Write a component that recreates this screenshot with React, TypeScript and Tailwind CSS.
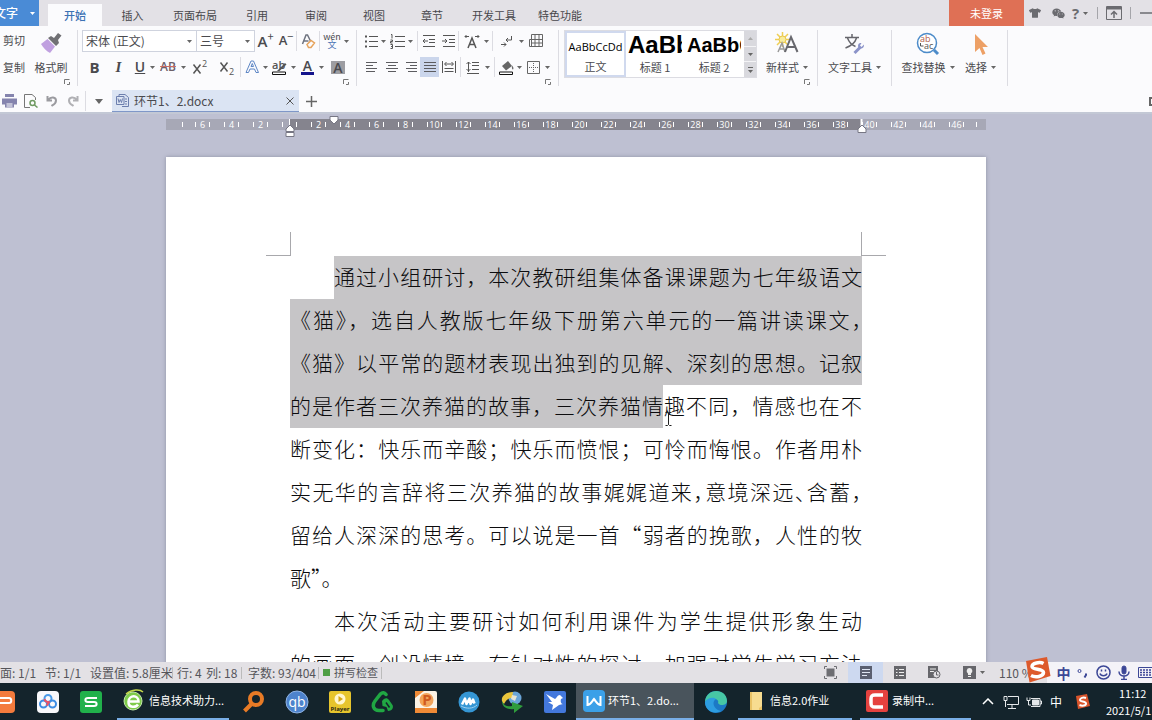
import type { ReactNode } from "react";
import { FaTshirt, FaWeixin } from "react-icons/fa";
import { clsx } from "clsx";

const menuTabs = [
	{ label: "插入", width: "w-[61px]" },
	{ label: "页面布局", width: "w-[64px]" },
	{ label: "引用", width: "w-[60px]" },
	{ label: "审阅", width: "w-[58px]" },
	{ label: "视图", width: "w-[58px]" },
	{ label: "章节", width: "w-[58px]" },
	{ label: "开发工具", width: "w-[66px]" },
	{ label: "特色功能", width: "w-[66px]" },
];

// even labels of the ruler, 0 is where the text column starts
const rulerMarks = Array.from({ length: 27 }, (_, i) => i * 2 - 6);

function Caret() {
	return (
		<svg width="5" height="3" viewBox="0 0 5 3" className="shrink-0" aria-hidden="true">
			<path d="M0 0h5L2.5 3z" fill="#666" />
		</svg>
	);
}

function Tool({
	label,
	width,
	active,
	children,
}: {
	label: string;
	width: string;
	active?: boolean;
	children: ReactNode;
}) {
	return (
		<button
			aria-label={label}
			className={clsx(
				"flex h-5 shrink-0 items-center justify-center",
				width,
				active && "bg-[#cbd6ec]",
			)}
		>
			{children}
		</button>
	);
}

function Split() {
	return <span className="h-5 w-px shrink-0 bg-[#dcdce2]" />;
}

function Launcher() {
	return (
		<button aria-label="更多设置" className="flex h-2 w-2 items-center justify-center">
			<svg width="6" height="6" viewBox="0 0 6 6" fill="none" stroke="#777">
				<path d="M.5 5V.5H5.5M3 5.5h2.5V3" />
			</svg>
		</button>
	);
}

function Lines({ rows }: { rows: [number, number][] }) {
	return (
		<svg width="14" height="12" viewBox="0 0 14 12" stroke="#5c5c60" aria-hidden="true">
			{rows.map(([from, to], i) => (
				<path key={i} d={`M${from} ${i * 3 + 1.5}H${to}`} />
			))}
		</svg>
	);
}

function TitleBar() {
	return (
		<header className="flex h-[26px] shrink-0 bg-[#e3e1e6] text-[11px] text-[#47474b]">
			<button className="flex w-[39px] items-center justify-end gap-3 bg-[#4a8bd6] pr-1 font-medium text-white">
				<span className="shrink-0 text-xs">文字</span>
				<svg width="5" height="3" viewBox="0 0 5 3" className="shrink-0" aria-hidden="true">
					<path d="M0 0h5L2.5 3z" fill="#fff" />
				</svg>
			</button>
			<nav className="ml-[9px] flex items-end">
				<button className="h-[22px] w-[54px] bg-[#fbfbfd] font-medium text-[#3b72b4]">开始</button>
				{menuTabs.map((t) => (
					<button key={t.label} className={clsx("h-[22px] shrink-0", t.width)}>
						{t.label}
					</button>
				))}
			</nav>
			<div className="ml-auto flex items-center text-[#6b6b70]">
				<button className="mr-[5px] h-full w-[75px] bg-[#df7055] text-white">未登录</button>
				<button aria-label="皮肤" className="w-[23px]">
					<FaTshirt size={12} />
				</button>
				<button aria-label="微信" className="w-[20px]">
					<FaWeixin size={13} />
				</button>
				<button aria-label="帮助" className="flex w-[25px] items-center gap-1 font-['Open_Sans'] text-[15px] font-bold">
					?
					<Caret />
				</button>
				<span className="h-3 w-px bg-[#a5a5aa]" />
				<button aria-label="隐藏功能区" className="flex w-[32px] justify-center">
					<svg width="16" height="14" viewBox="0 0 16 14" fill="none" stroke="#6b6b70">
						<path d="M.5.5h15v13H.5z" />
						<path d="M1 2h14" strokeWidth="3" />
						<path d="M8 12V5.500M5 8.500l3-3 3 3" strokeWidth="1.500" />
					</svg>
				</button>
				<span className="h-3 w-px bg-[#a5a5aa]" />
				<button aria-label="最小化" className="flex w-[21px] justify-end">
					<svg width="12" height="4" viewBox="0 0 12 4" aria-hidden="true">
						<path d="M0 2h12" stroke="#6b6b70" strokeWidth="1.500" />
					</svg>
				</button>
			</div>
		</header>
	);
}

function ClipboardGroup() {
	return (
		<div className="flex w-[78px] shrink-0 flex-col justify-between border-r border-[#dcdce2]">
			<div className="flex">
				<div className="flex w-[30px] flex-col gap-[7px] pl-[3px]">
					<button className="h-5 text-left whitespace-nowrap">剪切</button>
					<button className="h-5 text-left whitespace-nowrap">复制</button>
				</div>
				<button className="flex w-[42px] flex-col items-center">
					<svg width="22" height="22" viewBox="0 0 22 22" className="mt-[2px]" aria-hidden="true">
						<path d="M14 6l4-5 3.500 2.500-3.500 4.500 1 3-3 3L8 6l3-2z" fill="#707074" />
						<path d="M7.500 7l7.500 7.500-5 6.500C6 19 3 15.500 1 12z" fill="#c0a0e0" />
					</svg>
					<span className="mt-[3px] h-5 leading-5">格式刷</span>
				</button>
			</div>
			<div className="flex justify-end pr-[6px]">
				<Launcher />
			</div>
		</div>
	);
}

function FontGroup() {
	return (
		<div className="flex w-[279px] shrink-0 flex-col border-r border-[#dcdce2] pl-1">
			<div className="flex items-center">
				<div className="flex h-[22px] w-[173px] border border-[#cfd3de] bg-white">
					<label className="flex w-[114px] items-center border-r border-[#cfd3de] pr-1">
						<select aria-label="字体" className="w-full appearance-none bg-transparent pl-[3px] text-xs leading-4 outline-none">
							<option>宋体 (正文)</option>
						</select>
						<Caret />
					</label>
					<label className="flex flex-1 items-center pr-1">
						<select aria-label="字号" className="w-full appearance-none bg-transparent pl-[3px] text-xs leading-4 outline-none">
							<option>三号</option>
						</select>
						<Caret />
					</label>
				</div>
				<Tool label="增大字号" width="w-[21px]">
					<span className="font-['Open_Sans'] text-[15px] font-semibold">A</span>
					<sup className="text-[11px]">+</sup>
				</Tool>
				<Tool label="减小字号" width="w-[20px]">
					<span className="font-['Open_Sans'] text-[13px] font-semibold">A</span>
					<sup className="text-[11px]">−</sup>
				</Tool>
				<Split />
				<Tool label="清除格式" width="w-[22px]">
					<svg width="15" height="16" viewBox="0 0 15 16" fill="none" aria-hidden="true">
						<path d="M1.500 11L5 2h1.500l3 6M3 8h4.500" stroke="#6f7480" strokeWidth="1.500" />
						<path d="M6 11.500L10 7.500l3.500 2.500-3.500 4.500H7.500z" stroke="#e6a35c" strokeWidth="1.500" />
					</svg>
				</Tool>
				<Split />
				<Tool label="拼音指南" width="w-[24px]">
					<span className="flex flex-col items-center leading-none">
						<span className="text-[9px] leading-[7px]">wén</span>
						<span className="text-[9px] leading-[9px] text-[#4b73b5]">文</span>
					</span>
				</Tool>
				<Caret />
			</div>
			<div className="mt-[5px] flex items-center font-['Open_Sans'] text-[15px]">
				<Tool label="加粗" width="w-[25px]"><b>B</b></Tool>
				<Tool label="倾斜" width="w-[23px]"><i className="font-['Liberation_Serif'] font-bold">I</i></Tool>
				<Tool label="下划线" width="w-[20px]"><span className="text-sm font-semibold underline">U</span></Tool>
				<Caret />
				<Tool label="删除线" width="w-[26px]">
					<span className="text-xs font-semibold text-[#6d6068] line-through decoration-[#cc6a62]">AB</span>
				</Tool>
				<Caret />
				<Tool label="上标" width="w-[28px]">
					<svg width="16" height="15" viewBox="0 0 16 15" aria-hidden="true">
						<path d="M1.500 4.500l7 9M8.500 4.500l-7 9" stroke="#555" strokeWidth="1.500" />
						<text x="10" y="7" fontSize="9" fontFamily="Open Sans" fill="#555">2</text>
					</svg>
				</Tool>
				<Tool label="下标" width="w-[26px]">
					<svg width="16" height="15" viewBox="0 0 16 15" aria-hidden="true">
						<path d="M1.500 2.500l7 9M8.500 2.500l-7 9" stroke="#555" strokeWidth="1.500" />
						<text x="10" y="15" fontSize="9" fontFamily="Open Sans" fill="#555">2</text>
					</svg>
				</Tool>
				<Split />
				<Tool label="文字效果" width="w-[22px]">
					<svg width="15" height="14" viewBox="0 0 15 14" fill="none" stroke="#5d86c5" aria-hidden="true">
						<path d="M1 12.500L6 1h2.500l5 11.500H11L9.500 9H5l-1.500 3.500zM6 6.500h2.500L7.300 3.500z" />
					</svg>
				</Tool>
				<Caret />
				<Tool label="突出显示" width="w-[23px]">
					<svg width="15" height="15" viewBox="0 0 15 15" aria-hidden="true">
						<text x="0" y="9" fontSize="11" fontFamily="Open Sans" fontWeight="600" fill="#555">ab</text>
						<path d="M5 11l8-8 1.500 1.500-7 6.500z" fill="#555" />
						<path d="M.5 12h13v2.500H.5z" fill="#fff" stroke="#111" />
					</svg>
				</Tool>
				<Caret />
				<Tool label="字体颜色" width="w-[23px]">
					<span className="border-b-[3px] border-[#14148c] px-[2px] text-sm leading-[13px] font-semibold">A</span>
				</Tool>
				<Caret />
				<Tool label="字符底纹" width="w-[28px]">
					<span className="bg-[#9d9da2] px-[2px] text-sm leading-[13px] font-semibold">A</span>
				</Tool>
			</div>
			<div className="mt-auto flex justify-end pr-[6px]">
				<Launcher />
			</div>
		</div>
	);
}

function ParagraphGroup() {
	return (
		<div className="flex w-[202px] shrink-0 flex-col border-r border-[#dcdce2] pl-[5px]">
			<div className="mt-px flex items-center">
				<Tool label="项目符号" width="w-[19px]">
					<svg width="14" height="14" viewBox="0 0 14 14" stroke="#555" aria-hidden="true">
						<path d="M4 2.500h9M4 7.500h9M4 12.500h9" />
						<path d="M0 2.500h2M0 7.500h2M0 12.500h2" strokeWidth="2" />
					</svg>
				</Tool>
				<Caret />
				<Tool label="编号" width="w-[22px]">
					<svg width="15" height="16" viewBox="0 0 15 16" aria-hidden="true">
						<path d="M5 3.500h10M5 8.500h10M5 13.500h10" stroke="#555" />
						<path d="M1 1.500h1v4M.5 7h2v1.500h-2V10h2M.5 11.500h2v4h-2M1 13.500h1" fill="none" stroke="#555" />
					</svg>
				</Tool>
				<Caret />
				<span className="w-[4px]" />
				<Split />
				<Tool label="减少缩进" width="w-[22px]">
					<svg width="14" height="12" viewBox="0 0 14 12" fill="none" stroke="#555" aria-hidden="true">
						<path d="M1 .5h12M7 4.500h6M7 7.500h6M1 11.500h12M6 6H1M3 4L1 6l2 2" />
					</svg>
				</Tool>
				<Tool label="增加缩进" width="w-[18px]">
					<svg width="14" height="12" viewBox="0 0 14 12" fill="none" stroke="#555" aria-hidden="true">
						<path d="M1 .5h12M7 4.500h6M7 7.500h6M1 11.500h12M0 6h5M3 4l2 2-2 2" />
					</svg>
				</Tool>
				<Split />
				<Tool label="中文版式" width="w-[25px]">
					<svg width="16" height="15" viewBox="0 0 16 15" fill="none" stroke="#555" aria-hidden="true">
						<path d="M4 14L8 4l4 10M5.500 10.500h5" strokeWidth="1.500" />
						<path d="M5 2.500H1M2.500 1L1 2.500 2.500 4M11 2.500h4M13.500 1L15 2.500 13.500 4" />
					</svg>
				</Tool>
				<Caret />
				<span className="w-[3px]" />
				<Split />
				<Tool label="换行符" width="w-[26px]">
					<svg width="13" height="13" viewBox="0 0 13 13" fill="none" stroke="#555" aria-hidden="true">
						<path d="M11.500 1v4H6M8 3L6 5l2 2M1 9.500h5M4 7.500l2 2-2 2" />
					</svg>
				</Tool>
				<Caret />
				<Tool label="插入表格" width="w-[24px]">
					<svg width="14" height="14" viewBox="0 0 14 14" fill="none" stroke="#666" aria-hidden="true">
						<path d="M2.500.5h11v12H.5v-7h13M2.500.5v12M6 .5v12M10 .5v12M2.500 9H13" />
					</svg>
				</Tool>
			</div>
			<div className="mt-[6px] flex items-center">
				<Tool label="左对齐" width="w-[20px]"><Lines rows={[[1, 12], [1, 8], [1, 12], [1, 10]]} /></Tool>
				<Tool label="居中" width="w-[20px]"><Lines rows={[[1, 13], [3, 11], [1, 13], [3, 11]]} /></Tool>
				<Tool label="右对齐" width="w-[18px]"><Lines rows={[[2, 13], [6, 13], [2, 13], [4, 13]]} /></Tool>
				<Tool label="两端对齐" width="w-[19px]" active><Lines rows={[[1, 13], [1, 13], [1, 13], [1, 13]]} /></Tool>
				<Tool label="分散对齐" width="w-[19px]">
					<svg width="14" height="12" viewBox="0 0 14 12" fill="none" stroke="#555" aria-hidden="true">
						<path d="M.5 0v12M13.500 0v12M3 3h8M4.500 1L2.500 3l2 2M9.500 1l2 2-2 2M2.500 7.500h9M2.500 10.500h9" />
					</svg>
				</Tool>
				<span className="w-[2px]" />
				<Split />
				<Tool label="行距" width="w-[24px]">
					<svg width="14" height="13" viewBox="0 0 14 13" fill="none" stroke="#555" aria-hidden="true">
						<path d="M6 1.500h7M6 4.500h7M6 8.500h7M1 12.500h12M2.500 1v10M.5 3l2-2 2 2M.5 8l2 2 2-2" />
					</svg>
				</Tool>
				<Caret />
				<span className="w-[4px]" />
				<Split />
				<Tool label="底纹颜色" width="w-[22px]">
					<svg width="15" height="15" viewBox="0 0 15 15" aria-hidden="true">
						<path d="M3 6l6-5 4 5-6 4.500z" fill="#666" />
						<path d="M13 5.500c2 2 1.500 3.500 1 4s-1.500-1-1-4z" fill="#666" />
						<path d="M.5 12h13v2.500H.5z" fill="#fff" stroke="#111" />
					</svg>
				</Tool>
				<Caret />
				<Tool label="边框" width="w-[23px]">
					<svg width="13" height="13" viewBox="0 0 13 13" fill="none" stroke="#666" aria-hidden="true">
						<path d="M.5.5h12v12H.5z" />
						<path d="M6.500 2v10M2 6.500h10" strokeDasharray="1 1" />
					</svg>
				</Tool>
				<Caret />
			</div>
			<div className="mt-auto flex justify-end pr-[6px]">
				<Launcher />
			</div>
		</div>
	);
}

function StyleGroup() {
	return (
		<div className="flex w-[259px] shrink-0 border-r border-[#dcdce2] pl-[5px]">
			<div className="flex h-12 w-[193px] border border-[#dcdce2] bg-white">
				<button className="flex w-[61px] shrink-0 flex-col items-center border-2 border-[#d0d9ee] pt-[6px]">
					<span className="font-['Open_Sans'] text-[11px] leading-4 text-black">AaBbCcDd</span>
					<span className="mt-[3px] leading-4">正文</span>
				</button>
				<button className="flex w-[58px] shrink-0 flex-col items-center">
					<span className="w-[54px] overflow-hidden text-left font-['Liberation_Sans'] text-2xl leading-7 font-bold text-black">AaBb</span>
					<span className="leading-4">标题 1</span>
				</button>
				<button className="flex w-[60px] shrink-0 flex-col items-center">
					<span className="w-[54px] overflow-hidden text-left font-['Liberation_Sans'] text-xl leading-7 font-bold text-black">AaBbC</span>
					<span className="leading-4">标题 2</span>
				</button>
				<div className="flex flex-1 flex-col divide-y divide-[#f4f4f6] bg-[#d9d9de]">
					<button aria-label="向上" className="flex flex-1 items-center justify-center">
						<svg width="5" height="3" viewBox="0 0 5 3"><path d="M0 3h5L2.500 0z" fill="#aaa" /></svg>
					</button>
					<button aria-label="向下" className="flex flex-1 items-center justify-center"><Caret /></button>
					<button aria-label="展开样式" className="flex flex-1 flex-col items-center justify-center gap-[2px]">
						<span className="h-px w-[5px] bg-[#666]" />
						<Caret />
					</button>
				</div>
			</div>
			<div className="flex flex-1 flex-col justify-between">
				<button className="flex flex-col items-center">
					<svg width="24" height="24" viewBox="0 0 24 24" className="mt-[2px]" aria-hidden="true">
						<path d="M7.500 0v15M0 7.500h15M2 2l11 11M13 2L2 13" stroke="#efcf55" strokeWidth="1.500" />
						<circle cx="7.500" cy="7.500" r="3.500" fill="#f8ec9c" stroke="#e9c549" />
						<path d="M3 20l4-9 3 9M5 17h4" stroke="#999" fill="none" strokeWidth="1.500" />
						<path d="M10 20l6-15 6.500 15M12.500 15h7" stroke="#68686e" strokeWidth="2" fill="none" />
					</svg>
					<span className="mt-px flex h-5 items-center gap-1 whitespace-nowrap">新样式 <Caret /></span>
				</button>
				<div className="flex justify-end pr-[6px]">
					<Launcher />
				</div>
			</div>
		</div>
	);
}

function Ribbon() {
	return (
		<div className="flex h-[64px] shrink-0 bg-[#fbfbfd] pt-1 pb-1 text-[11px] text-[#4a4a4e]">
			<ClipboardGroup />
			<FontGroup />
			<ParagraphGroup />
			<StyleGroup />
			<div className="flex w-[74px] shrink-0 justify-center border-r border-[#dcdce2]">
				<button className="flex flex-col items-center">
					<svg width="22" height="22" viewBox="0 0 22 22" fill="none" className="mt-[3px]" aria-hidden="true">
						<path d="M1 4.500h14M8 1v3M12.500 5C11 10 7 13 1.500 15M3.500 5c1.500 4 4 7 8 8.500" stroke="#66666c" strokeWidth="1.500" />
						<path d="M10.500 20l6-6" stroke="#8b93c9" strokeWidth="3" />
						<path d="M20 11.500l-2.500 2.500-1.500-1.500 1.500-2.500c-3-.5-4 2-3 4.500 2 2 6 1 5.500-3z" fill="#8b93c9" />
					</svg>
					<span className="mt-[2px] flex h-5 items-center gap-1 whitespace-nowrap">文字工具 <Caret /></span>
				</button>
			</div>
			<div className="flex w-[116px] shrink-0 border-r border-[#dcdce2] pl-[9px]">
				<button className="flex w-[54px] flex-col items-center">
					<svg width="24" height="24" viewBox="0 0 24 24" className="mt-[2px]" aria-hidden="true">
						<circle cx="11" cy="11" r="9.500" fill="#fff" stroke="#4c8bc9" strokeWidth="1.500" />
						<path d="M18 18l4 4" stroke="#4c8bc9" strokeWidth="3" />
						<text x="4" y="10" fontSize="9" fontFamily="Open Sans" fill="#b0604c">ab</text>
						<text x="8" y="17" fontSize="9" fontFamily="Open Sans" fill="#555">ac</text>
						<path d="M4.500 11v3h3" stroke="#555" fill="none" />
					</svg>
					<span className="mt-px flex h-5 items-center gap-1 whitespace-nowrap">查找替换 <Caret /></span>
				</button>
				<button className="flex w-[51px] flex-col items-center">
					<svg width="16" height="22" viewBox="0 0 16 22" className="mt-[4px]" aria-hidden="true">
						<path d="M2 0l13 13H9.500l3 6.500-3 1.500-3-7L2 18z" fill="#eda066" />
					</svg>
					<span className="mt-px flex h-5 items-center gap-1 whitespace-nowrap">选择 <Caret /></span>
				</button>
			</div>
		</div>
	);
}

function DocTabs() {
	return (
		<div className="flex h-6 shrink-0 items-center border-b-2 border-[#c3c8d5] bg-[#fbfbfd] text-xs text-[#4a4a4e]">
			<button aria-label="打印" className="w-[20px] pl-[2px]">
				<svg width="15" height="14" viewBox="0 0 15 14" aria-hidden="true">
					<path d="M3 0h9v3H3zM0 4.500h15v6H0zM3 8h9v5.500H3z" fill="#8584ae" />
					<path d="M4.500 9.500h6v1h-6zM4.500 11.500h6v1h-6z" fill="#fff" />
				</svg>
			</button>
			<button aria-label="打印预览" className="flex w-[22px] justify-center">
				<svg width="14" height="14" viewBox="0 0 14 14" fill="none" stroke="#777" aria-hidden="true">
					<path d="M6 13.500H.5V.5H8l3.500 3V6" />
					<circle cx="8.500" cy="9" r="2.500" stroke="#6f9a62" strokeWidth="1.500" />
					<path d="M10.500 11l3 2.500" stroke="#6f9a62" strokeWidth="1.500" />
				</svg>
			</button>
			<button aria-label="撤销" className="flex w-[20px] justify-center">
				<svg width="12" height="12" viewBox="0 0 12 12" fill="none" stroke="#9b9ba0" strokeWidth="2" aria-hidden="true">
					<path d="M1.500 1v4.500H6M2 5c3-4 8-3 8 .5S7 10 5.500 11" />
				</svg>
			</button>
			<button aria-label="恢复" className="flex w-[21px] justify-center">
				<svg width="12" height="12" viewBox="0 0 12 12" fill="none" stroke="#b0b0b4" strokeWidth="2" aria-hidden="true">
					<path d="M10.500 1v4.500H6M10 5C7 1 2 2 2 5.500S5 10 6.500 11" />
				</svg>
			</button>
			<span className="ml-[2px] h-5 w-px bg-[#dcdce2]" />
			<button aria-label="自定义工具栏" className="flex w-[26px] justify-center">
				<svg width="8" height="5" viewBox="0 0 8 5" aria-hidden="true">
					<path d="M0 0h8L4 5z" fill="#666" />
				</svg>
			</button>
			<div className="flex h-[22px] w-[187px] items-center border-b border-[#7f97c8] bg-[#dbe4f3] pr-[5px] pl-1">
				<svg width="13" height="13" viewBox="0 0 13 13" fill="none" stroke="#6d7fae" aria-hidden="true">
					<path d="M3 2V.5h6l3.500 3v9H6" />
					<path d="M.5 2.500h7.500v8H.5zM2 4.500l1 4 1.300-3 1.200 3 1-4M9 5h2M9 7.500h2M9 10h2" />
				</svg>
				<span className="ml-[5px]">环节1、2.docx</span>
				<button aria-label="关闭" className="ml-auto">
					<svg width="8" height="8" viewBox="0 0 8 8" stroke="#555" aria-hidden="true">
						<path d="M.5.5l7 7M7.500.5l-7 7" />
					</svg>
				</button>
			</div>
			<button aria-label="新建" className="flex w-[25px] justify-center">
				<svg width="11" height="11" viewBox="0 0 11 11" stroke="#666" aria-hidden="true">
					<path d="M5.500 0v11M0 5.500h11" strokeWidth="1.500" />
				</svg>
			</button>
			<span className="ml-auto h-[9px] w-[3px] border-2 border-r-0 border-[#666]" />
		</div>
	);
}

function Ruler() {
	return (
		<div className="relative mx-auto mt-[5px] w-[820px]">
			<div className="flex h-[11px] items-center bg-[linear-gradient(to_right,#a7a8b6_124px,#85848e_124px,#85848e_696px,#a7a8b6_696px)] pr-[9px] pl-[16px] text-white">
				<span className="h-[5px] w-px bg-white" />
				<div className="ml-[5px] grid flex-1 grid-cols-[repeat(27,minmax(0,1fr))]">
					{rulerMarks.map((n) => (
						<div key={n} className="flex items-center px-[7px] leading-[11px]">
							<span className="h-[5px] w-px shrink-0 bg-white" />
							<span className="flex min-w-0 flex-1 justify-center font-['Open_Sans'] text-[9px]">
								{n === 0 ? "" : Math.abs(n)}
							</span>
							<span className="h-[5px] w-px shrink-0 bg-white" />
						</div>
					))}
				</div>
				<span className="ml-[5px] h-[5px] w-px bg-white" />
			</div>
			<svg width="10" height="18" viewBox="0 0 10 18" className="absolute top-0 left-[119px]" aria-hidden="true">
				<path d="M4.500 0v7" stroke="#fff" />
				<path d="M1 12.500V10l4-4 4 4v2.500zM1 13.500h8v4H1z" fill="#fff" stroke="#777784" />
			</svg>
			<svg width="10" height="9" viewBox="0 0 10 9" className="absolute -top-[3px] left-[163px]" aria-hidden="true">
				<path d="M1 .5h8V4L5 8 1 4z" fill="#fff" stroke="#777784" />
			</svg>
			<svg width="10" height="14" viewBox="0 0 10 14" className="absolute top-0 left-[691px]" aria-hidden="true">
				<path d="M4.500 0v7" stroke="#fff" strokeWidth="2" />
				<path d="M1 13.500V10l4-4 4 4v3.500z" fill="#fff" stroke="#777784" />
			</svg>
		</div>
	);
}

function Line({
	selected,
	width,
	children,
}: {
	selected?: boolean;
	width?: string;
	children: ReactNode;
}) {
	return (
		<div
			className={clsx(
				"pb-[3px] leading-10 whitespace-nowrap text-justify [text-align-last:justify]",
				selected && "bg-[#c6c5c7]",
				width,
			)}
		>
			{children}
		</div>
	);
}

// half-width form of a punctuation mark
function Half({ children }: { children: string }) {
	return <span className="[font-feature-settings:'halt']">{children}</span>;
}

function Page() {
	return (
		<article className="relative mx-auto mt-[27px] w-[820px] bg-white shadow-[0_0_4px_#8f91a4]">
			<div className="flex justify-between px-[100px] pt-[75px]">
				<span className="h-6 w-[25px] border-r border-b border-[#a8a8ac]" />
				<span className="h-6 w-[25px] border-b border-l border-[#a8a8ac]" />
			</div>
			<div className="px-[124px] text-[21px] font-light text-[#0c0c0e]">
				<div className="pl-[44px]">
					<Line selected>通过小组研讨，本次教研组集体备课课题为七年级语文</Line>
				</div>
				<Line selected>《猫》，选自人教版七年级下册第六单元的一篇讲读课文<Half>，</Half></Line>
				<Line selected>《猫》以平常的题材表现出独到的见解、深刻的思想。记叙</Line>
				<div className="flex gap-px">
					<Line selected width="w-[373px]">的是作者三次养猫的故事，三次养猫情</Line>
					<Line width="flex-1">趣不同，情感也在不</Line>
				</div>
				<Line>断变化：快乐而辛酸；快乐而愤恨；可怜而悔恨。作者用朴</Line>
				<Line>
					实无华的言辞将三次养猫的故事娓娓道来<Half>，</Half>意境深远<Half>、</Half>含蓄<Half>，</Half>
				</Line>
				<Line>留给人深深的思考。可以说是一首“弱者的挽歌，人性的牧</Line>
				<div className="pb-[3px] leading-10">歌”。</div>
				<div className="pl-[44px]">
					<Line>本次活动主要研讨如何利用课件为学生提供形象生动</Line>
				</div>
				<Line>的画面，创设情境，有针对性的探讨，加强对学生学习方法</Line>
			</div>
			<svg width="7" height="14" viewBox="0 0 7 14" fill="none" stroke="#222" className="absolute top-[255px] left-[499px]" aria-hidden="true">
				<path d="M.5.5h2l1 1 1-1h2M3.500 1.500v11M.5 13.500h2l1-1 1 1h2" />
			</svg>
		</article>
	);
}

function StatusBar() {
	return (
		<footer className="flex h-[21px] shrink-0 items-center bg-[#e3e1e5] text-xs whitespace-nowrap text-[#55555a]">
			<span className="w-[45px]">面: 1/1</span>
			<span className="w-[45px]">节: 1/1</span>
			<span className="w-[82px]">设置值: 5.8厘米</span>
			<span className="h-3 w-px bg-[#bbb]" />
			<span className="w-[33px] pl-1">行: 4</span>
			<span className="w-[35px]">列: 18</span>
			<span className="h-3 w-px bg-[#bbb]" />
			<span className="w-[76px] pl-[6px]">字数: 93/404</span>
			<span className="h-3 w-px bg-[#bbb]" />
			<button className="flex w-[62px] items-center gap-1 pl-1">
				<span className="h-[7px] w-[7px] shrink-0 bg-[#4f9f45]" />
				<span className="text-[11px]">拼写检查</span>
			</button>
			<span className="h-3 w-px bg-[#bbb]" />
			<div className="mr-[126px] ml-auto flex h-full items-center">
				<button aria-label="全屏显示" className="flex w-[35px] justify-center">
					<svg width="13" height="13" viewBox="0 0 13 13" aria-hidden="true">
						<path d="M2.500 2.500h8v8h-8z" fill="#6d6d72" />
						<path d="M.5 3V.5H3M10 .5h2.500V3M12.500 10v2.500H10M3 12.500H.5V10" fill="none" stroke="#6d6d72" />
					</svg>
				</button>
				<button aria-label="页面视图" className="flex h-full w-[35px] items-center justify-center bg-[#cdd9f0]">
					<svg width="12" height="13" viewBox="0 0 12 13" aria-hidden="true">
						<path d="M0 0h12v13H0z" fill="#5a5f70" />
						<path d="M2 3.500h8M2 6.500h8M2 9.500h5" stroke="#dfe5f2" />
					</svg>
				</button>
				<button aria-label="大纲视图" className="flex w-[34px] justify-center">
					<svg width="12" height="13" viewBox="0 0 12 13" aria-hidden="true">
						<path d="M0 0h12v13H0z" fill="#66666b" />
						<path d="M2 3.500h1.500M5 3.500h5M2 6.500h1.500M5 6.500h5M2 9.500h1.500M5 9.500h5" stroke="#eee" />
					</svg>
				</button>
				<button aria-label="Web版式" className="flex w-[34px] justify-center">
					<svg width="13" height="13" viewBox="0 0 13 13" aria-hidden="true">
						<path d="M0 0h10v12H0z" fill="#66666b" />
						<path d="M2 3h6M2 5.500h4" stroke="#eee" />
						<circle cx="8.500" cy="8.500" r="3.500" fill="#e3e1e5" stroke="#66666b" />
						<path d="M8.500 6v3h2" fill="none" stroke="#66666b" />
					</svg>
				</button>
				<button aria-label="护眼模式" className="flex w-[46px] items-center justify-center gap-1">
					<svg width="13" height="13" viewBox="0 0 13 13" aria-hidden="true">
						<path d="M0 0h13v13H0z" fill="#66666b" />
						<path d="M6.500 2a3 3 0 0 1 1.500 5.500V9H5V7.500A3 3 0 0 1 6.500 2zM5 10h3v1H5z" fill="#eee" />
					</svg>
					<Caret />
				</button>
				<span className="w-[29px] pl-[2px]">110 %</span>
			</div>
		</footer>
	);
}

function InputMethodBar() {
	return (
		<div className="absolute right-0 bottom-[37px] flex h-[25px] w-[129px] items-end">
			<svg width="28" height="26" viewBox="0 0 28 26" className="relative z-10 shrink-0" aria-hidden="true">
				<path d="M3 4L24 0l3.500 19-21 6.500z" fill="#dd5a2c" />
				<path d="M20.500 6.500C17 4.500 9 6 9 9.500s11.500 2 11.500 6-8 5.500-12.500 3" fill="none" stroke="#fff" strokeWidth="3.500" />
			</svg>
			<div className="-ml-1 flex h-[21px] flex-1 items-center bg-[#f4f3f8] pl-[7px] text-sm font-bold text-[#3c4796]">
				<button className="w-[19px] leading-5">中</button>
				<button aria-label="标点" className="flex w-[19px] justify-center">
					<svg width="11" height="10" viewBox="0 0 11 10" aria-hidden="true">
						<circle cx="2.500" cy="3" r="1.500" fill="none" stroke="#3c4796" />
						<path d="M9 5.500v1.500L7.500 9.500" stroke="#3c4796" strokeWidth="2" />
					</svg>
				</button>
				<button aria-label="表情" className="flex w-[22px] justify-center">
					<svg width="15" height="15" viewBox="0 0 15 15" fill="none" stroke="#3c4796" aria-hidden="true">
						<circle cx="7.500" cy="7.500" r="6.500" strokeWidth="1.500" />
						<path d="M4 8.500c1 3 6 3 7 0M5.500 4.500v2M9.500 4.500v2" strokeWidth="1.500" />
					</svg>
				</button>
				<button aria-label="语音" className="flex w-[20px] justify-center">
					<svg width="12" height="15" viewBox="0 0 12 15" fill="none" stroke="#3c4796" aria-hidden="true">
						<rect x="4" y="1" width="4" height="8" rx="2" fill="#3c4796" />
						<path d="M1 6.500c0 6 10 6 10 0M6 11v3M3 14.500h6" strokeWidth="1.500" />
					</svg>
				</button>
				<button aria-label="软键盘" className="flex w-[18px] shrink-0 justify-end">
					<svg width="14" height="11" viewBox="0 0 14 11" aria-hidden="true">
						<path d="M.5.5h18v10H.5z" fill="none" stroke="#3c4796" />
						<path d="M2 3h14M2 5.500h14M2 8h14" stroke="#3c4796" strokeWidth="1.500" strokeDasharray="2 1" />
					</svg>
				</button>
			</div>
		</div>
	);
}

function TaskIcon({ label, children }: { label: string; children: ReactNode }) {
	return (
		<button aria-label={label} className="flex w-[43px] shrink-0 items-center justify-center">
			<svg width="24" height="24" viewBox="0 0 24 24" aria-hidden="true">{children}</svg>
		</button>
	);
}

function TaskWindow({
	title,
	width,
	focused,
	children,
}: {
	title: string;
	width: string;
	focused?: boolean;
	children: ReactNode;
}) {
	return (
		<button
			className={clsx(
				"flex shrink-0 items-center gap-[2px] border-b-2 border-[#79aee6] pl-[6px] text-[11px] whitespace-nowrap text-white",
				width,
				focused && "bg-[#49545c]",
			)}
		>
			<svg width="24" height="24" viewBox="0 0 24 24" className="shrink-0" aria-hidden="true">{children}</svg>
			{title}
		</button>
	);
}

function TaskBar() {
	return (
		<div className="flex h-[37px] shrink-0 bg-[#14242c]">
			<button aria-label="WPS演示" className="flex w-[26px] items-center">
				<svg width="16" height="24" viewBox="8 0 16 24" aria-hidden="true">
					<rect x="1" y="1" width="22" height="22" rx="4" fill="#f47b3d" />
					<path d="M8 8h9c3 0 3 5 0 5H8" fill="none" stroke="#fff" strokeWidth="2" />
				</svg>
			</button>
			<TaskIcon label="百度网盘">
				<rect x="1" y="1" width="22" height="22" rx="4" fill="#f8f8fb" />
				<circle cx="12" cy="8.500" r="3.500" fill="none" stroke="#4b9be8" strokeWidth="2" />
				<circle cx="7.500" cy="14" r="3.500" fill="none" stroke="#3c8ce4" strokeWidth="2" />
				<circle cx="16.500" cy="14" r="3.500" fill="none" stroke="#3c8ce4" strokeWidth="2" />
				<path d="M8.500 9a3.500 3.500 0 0 0 5 2.600l-3 4" fill="none" stroke="#e8546a" strokeWidth="2" />
			</TaskIcon>
			<TaskIcon label="WPS表格">
				<rect x="1" y="1" width="22" height="22" rx="3" fill="#21b14b" />
				<path d="M18 8H9c-3.500 0-3.500 4 0 4h6c3.500 0 3.500 4 0 4H6" fill="none" stroke="#fff" strokeWidth="2" />
			</TaskIcon>
			<span className="w-[5px]" />
			<TaskWindow title="信息技术助力..." width="w-[112px]">
				<circle cx="10" cy="12" r="9" fill="#7ecb4a" stroke="#c6e9ae" />
				<path d="M5 12.500h10.500c0-7-9.500-7-10 0s7.500 6 9.500 3" fill="none" stroke="#fff" strokeWidth="2.500" />
				<path d="M3 5c6-5 14-5 17-2" fill="none" stroke="#c5d84a" strokeWidth="1.500" />
			</TaskWindow>
			<span className="w-[3px]" />
			<TaskIcon label="搜索">
				<circle cx="14" cy="9" r="6" fill="none" stroke="#e87b26" strokeWidth="4" />
				<path d="M9.500 14l-7 7" stroke="#e87b26" strokeWidth="4" />
			</TaskIcon>
			<TaskIcon label="QQ浏览器">
				<circle cx="12" cy="12" r="11" fill="#4d83cc" stroke="#91b5e5" />
				<text x="12" y="17" fontSize="14" fontFamily="Open Sans" textAnchor="middle" fill="#fff">qb</text>
			</TaskIcon>
			<TaskIcon label="播放器">
				<rect x="1" y="1" width="22" height="22" rx="2" fill="#e6c52d" />
				<circle cx="12" cy="9" r="5.500" fill="#fff7cf" />
				<path d="M10.500 6l4.500 3-4.500 3z" fill="#d6a714" />
				<text x="12" y="21" fontSize="6" fontWeight="700" fontFamily="Open Sans" textAnchor="middle" fill="#2d2a14">Player</text>
			</TaskIcon>
			<TaskIcon label="清理">
				<path d="M12 20.500H8C2 20.500 1 15 4 11l5.500-7c2-2 4-1.500 5.500.5" fill="none" stroke="#20a743" strokeWidth="3.500" strokeLinecap="round" />
				<path d="M11 11c2-3 5-4 7-1l3.500 5c1.500 3-1 6-4.500 6l-1.500-4-4-1z" fill="#20a743" />
				<path d="M15 12.500l3.500 5" stroke="#14242c" strokeWidth="1.500" />
			</TaskIcon>
			<TaskIcon label="iPPT">
				<rect x="1" y="1" width="22" height="22" rx="2" fill="#fbf2e5" />
				<path d="M1 1h9L1 8zM1 18h22v5H1z" fill="#ef8a36" />
				<circle cx="12.500" cy="10" r="7" fill="#f3a45a" />
				<text x="13" y="15" fontSize="15" fontWeight="700" fontFamily="Open Sans" textAnchor="middle" fill="#d05a20">P</text>
			</TaskIcon>
			<TaskIcon label="遨游">
				<circle cx="12" cy="12" r="10.500" fill="#3596d4" />
				<path d="M5 14.500l3-6 1.500 5.500 3-5.500 1 5.500L16 9.500l1.500 4" fill="none" stroke="#fff" strokeWidth="2.500" strokeLinejoin="round" />
				<path d="M4 16c5 3 12 3 16-1" fill="none" stroke="#9dd1f1" />
			</TaskIcon>
			<TaskIcon label="下载管理器">
				<circle cx="15" cy="8" r="6.500" fill="#6aa5d8" />
				<path d="M13 2c-10 0-14 8-9 12 3-6 6-6 8-6z" fill="#eac53c" />
				<path d="M2 11c2 5 6 6 10 5v-4l11 4-9 7v-4C7 20 2 17 2 11z" fill="#2f9c3c" />
				<path d="M12 5l5 1-2 5-4-2z" fill="#e4e4d5" />
			</TaskIcon>
			<TaskIcon label="迅雷">
				<rect x="1" y="1" width="22" height="22" rx="2" fill="#4378dc" />
				<path d="M3 4l9 5c2-1 2-4 5-4l3 3-2 1c-1 4 1 5 2 5l-4 1-7 5 1-5-5-3h4L6 8z" fill="#fff" />
			</TaskIcon>
			<TaskWindow title="环节1、2.do..." width="w-[118px]" focused>
				<rect x="1" y="1" width="22" height="22" rx="4" fill="#3ba0e8" />
				<path d="M5.500 7v9c3 0 4-3 6.500-6 2.500 3 3.500 6 6.500 6V7" fill="none" stroke="#fff" strokeWidth="2" />
			</TaskWindow>
			<TaskIcon label="Edge">
				<circle cx="12" cy="12" r="11" fill="#1c79c5" />
				<path d="M1 12C2-3 23-2 23 11c0 5-8 5-9 2 2-5-8-6-13-1z" fill="#47c7a5" />
				<path d="M12 9c-5 3-2 11 5 12-8 4-16-1-16-9 3-5 9-5 11-3z" fill="#2d9de0" />
			</TaskIcon>
			<span className="w-px" />
			<TaskWindow title="信息2.0作业" width="w-[114px]">
				<path d="M6 3h12v18H6z" fill="#e9c265" />
				<path d="M8 3h10v14l-3 2v2H8z" fill="#f7dc90" />
			</TaskWindow>
			<span className="w-2" />
			<TaskWindow title="录制中..." width="w-[111px]">
				<rect x="0" y="1" width="22" height="22" rx="2" fill="#e5423f" />
				<path d="M17 6H9c-3 0-4 1-4 4v4c0 3 1 4 4 4h8" fill="none" stroke="#fff" strokeWidth="3.500" />
			</TaskWindow>
			<div className="ml-auto flex items-center text-[11px] text-white">
				<button aria-label="显示隐藏的图标" className="flex w-[22px] justify-center">
					<svg width="12" height="7" viewBox="0 0 12 7" fill="none" stroke="#fff"><path d="M1 6l5-5 5 5" strokeWidth="1.500" /></svg>
				</button>
				<button aria-label="网络" className="flex w-[23px] justify-center">
					<svg width="16" height="14" viewBox="0 0 16 14" fill="none" stroke="#e5e8ea">
						<path d="M5 1.500h10.500v8H4M1 1.500h3v4H1zM2.500 5.500V12M9 9.500V13M5 13.500h8" />
					</svg>
				</button>
				<button aria-label="电池" className="flex w-[23px] justify-center">
					<svg width="16" height="12" viewBox="0 0 16 12" fill="none" stroke="#e5e8ea">
						<path d="M5 2.500h9v8H5M14 5h1.500v3H14M1 1.500v3h3v-3M2.500 4.500V9H5" />
						<path d="M6.500 4h6v5h-6z" fill="#e5e8ea" />
					</svg>
				</button>
				<button className="w-[22px] text-xs">中</button>
				<button aria-label="搜狗输入法" className="flex w-[31px] justify-center">
					<svg width="15" height="15" viewBox="0 0 15 15">
						<path d="M1 2l11-2 3 12-12 3z" fill="#d9552c" />
						<path d="M11 4C8 3 5 4 5 6s6 1 6 3.500-4 2.500-6.500 1.500" fill="none" stroke="#fff" strokeWidth="2" />
					</svg>
				</button>
				<div className="flex w-[54px] flex-col pl-2 leading-[17px] whitespace-nowrap">
					<time className="pl-[13px]">11:12</time>
					<time>2021/5/1</time>
				</div>
			</div>
		</div>
	);
}

export default function App() {
	return (
		<div
			lang="zh-CN"
			className="relative flex h-screen flex-col overflow-hidden bg-[#bec0d2] font-['Noto_Sans_CJK_SC',sans-serif]"
		>
			<TitleBar />
			<Ribbon />
			<DocTabs />
			<main className="min-h-0 flex-1 overflow-hidden">
				<Ruler />
				<Page />
			</main>
			<StatusBar />
			<TaskBar />
			<InputMethodBar />
		</div>
	);
}
